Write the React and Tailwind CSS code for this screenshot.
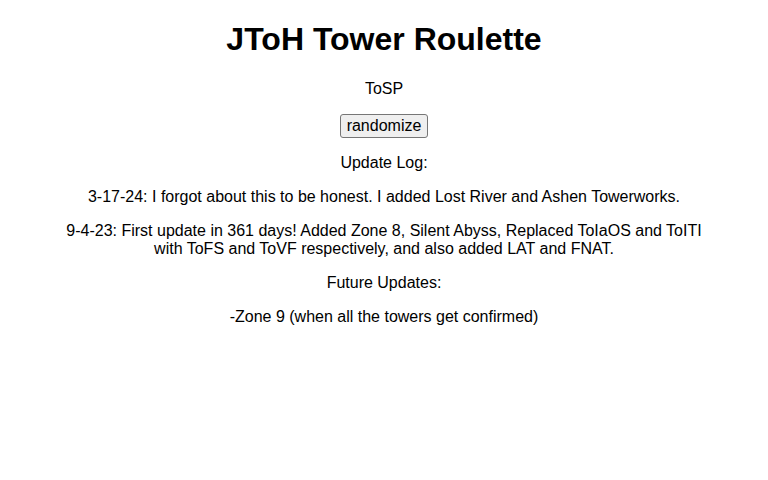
import React from 'react'

function App() {
  return (
    <div className="w-full min-h-screen bg-white text-black text-center font-['Liberation_Sans',Arial,sans-serif] text-base leading-[normal] px-2">
      <h1 className="text-[32px] font-bold my-[21.44px] leading-[normal]">JToH Tower Roulette</h1>
      <p className="my-4">ToSP</p>
      <p className="my-4">
        <button className="bg-[#efefef] border border-[#767676] rounded-[3px] px-[6px] py-[2px] text-base leading-[normal]">randomize</button>
      </p>
      <p className="my-4">Update Log:</p>
      <p className="my-4 max-w-[660px] mx-auto">3-17-24: I forgot about this to be honest. I added Lost River and Ashen Towerworks.</p>
      <p className="my-4 max-w-[660px] mx-auto">9-4-23: First update in 361 days! Added Zone 8, Silent Abyss, Replaced ToIaOS and ToITI with ToFS and ToVF respectively, and also added LAT and FNAT.</p>
      <p className="my-4">Future Updates:</p>
      <p className="my-4">-Zone 9 (when all the towers get confirmed)</p>
    </div>
  )
}

export default App
